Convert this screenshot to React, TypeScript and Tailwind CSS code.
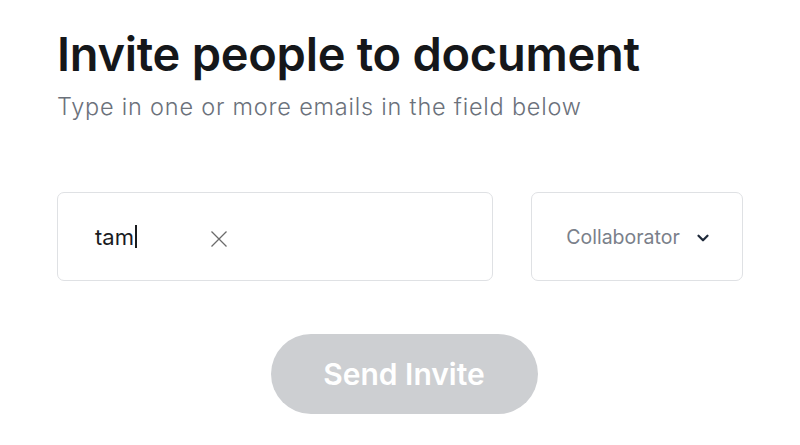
import { ChevronDown } from "lucide-react";

function ClearIcon() {
  return (
    <svg width="18" height="18" viewBox="0 0 18 18" fill="none" stroke="#6b6b6b" strokeWidth="1.3">
      <path d="M1.5 1.5 L16.5 16.5 M16.5 1.5 L1.5 16.5" />
    </svg>
  );
}

export default function App() {
  return (
    <div
      className="min-h-[445px] w-[800px] bg-white px-[57px] pt-[27px]"
      style={{ fontFamily: "Inter, 'Noto Sans', sans-serif" }}
    >
      <h1 className="text-[47px] font-semibold leading-[54px] tracking-[-0.28px] text-[#15171a]">
        Invite people to document
      </h1>
      <p className="mt-[10px] text-[23.5px] font-light leading-[31px] tracking-[0.78px] text-[#6b717b]">
        Type in one or more emails in the field below
      </p>

      <div className="mt-[70px] flex gap-[38px]">
        <div className="flex h-[89px] w-[436px] items-center rounded-[7px] border border-[#dfe1e4] pl-[37px]">
          <span className="text-[22px] leading-none text-[#1a1c1f]">tam</span>
          <span className="ml-[1px] h-[23px] w-[2px] bg-[#1a1c1f]" />
          <span className="ml-[73px] mt-[4px] flex">
            <ClearIcon />
          </span>
        </div>
        <div className="flex h-[89px] w-[212px] items-center justify-center gap-[14px] rounded-[7px] border border-[#dfe1e4] pl-[4px] pt-[3px]">
          <span className="text-[19.5px] text-[#7a808a]">Collaborator</span>
          <ChevronDown className="h-[18px] w-[18px] text-[#1f2a3a]" strokeWidth={3} />
        </div>
      </div>

      <div className="mt-[53px] flex justify-center">
        <button className="ml-[8px] flex h-[80px] w-[267px] items-center justify-center rounded-full bg-[#cdcfd2] text-[30px] font-semibold text-white">
          Send Invite
        </button>
      </div>
    </div>
  );
}
